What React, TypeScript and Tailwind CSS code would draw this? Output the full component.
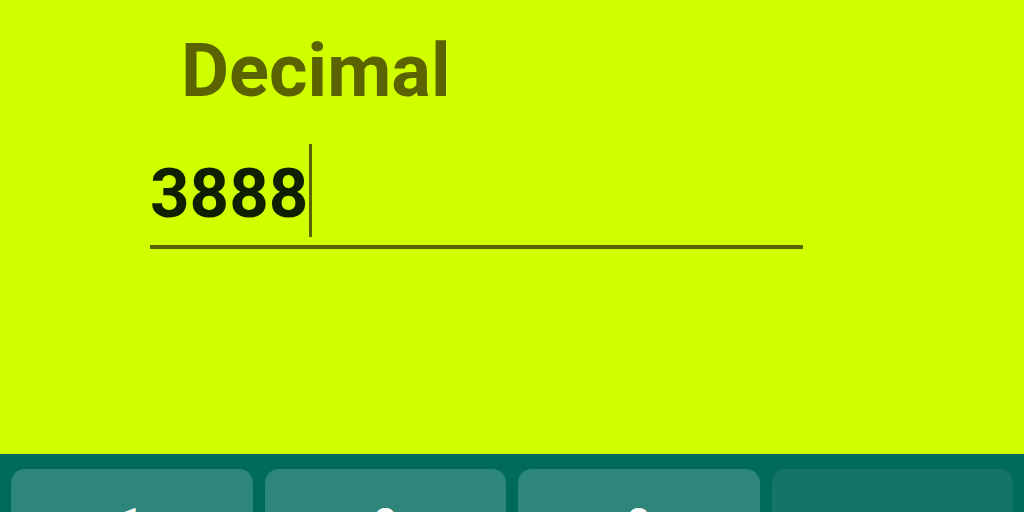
export default function App() {
  const keys = [
    { label: "1", bg: "bg-[#2e8579]" },
    { label: "2", bg: "bg-[#2e8579]" },
    { label: "3", bg: "bg-[#2e8579]" },
    { label: "", bg: "bg-[#137467]" },
  ];

  return (
    <div className="w-[1024px] h-[512px] overflow-hidden flex flex-col bg-[#d0ff00] font-['Roboto',sans-serif]">
      {/* converter field */}
      <div className="h-[454px] shrink-0 pl-[150px] pt-[34px]">
        <div className="pl-[31px] text-[74px] font-bold leading-none text-[#5b6300]">
          Decimal
        </div>
        <div className="mt-[36px] w-[653px] pb-[8px] border-b-[4px] border-[#5b6300]">
          <div className="flex items-start h-[93px]">
            <span className="mt-[15px] text-[69px] font-bold leading-none text-[#0f2000]">
              3888
            </span>
            <span className="ml-[1px] w-[3px] h-full bg-[#5b6300]" />
          </div>
        </div>
      </div>

      {/* keypad */}
      <div className="flex-1 bg-[#006b5c] px-[11px] pt-[15px] flex gap-[12px]">
        {keys.map((k, i) => (
          <div
            key={i}
            className={`flex-1 rounded-t-[14px] ${k.bg} flex justify-center pt-[35px] text-[40px] font-medium leading-none text-white`}
          >
            {k.label}
          </div>
        ))}
      </div>
    </div>
  );
}
